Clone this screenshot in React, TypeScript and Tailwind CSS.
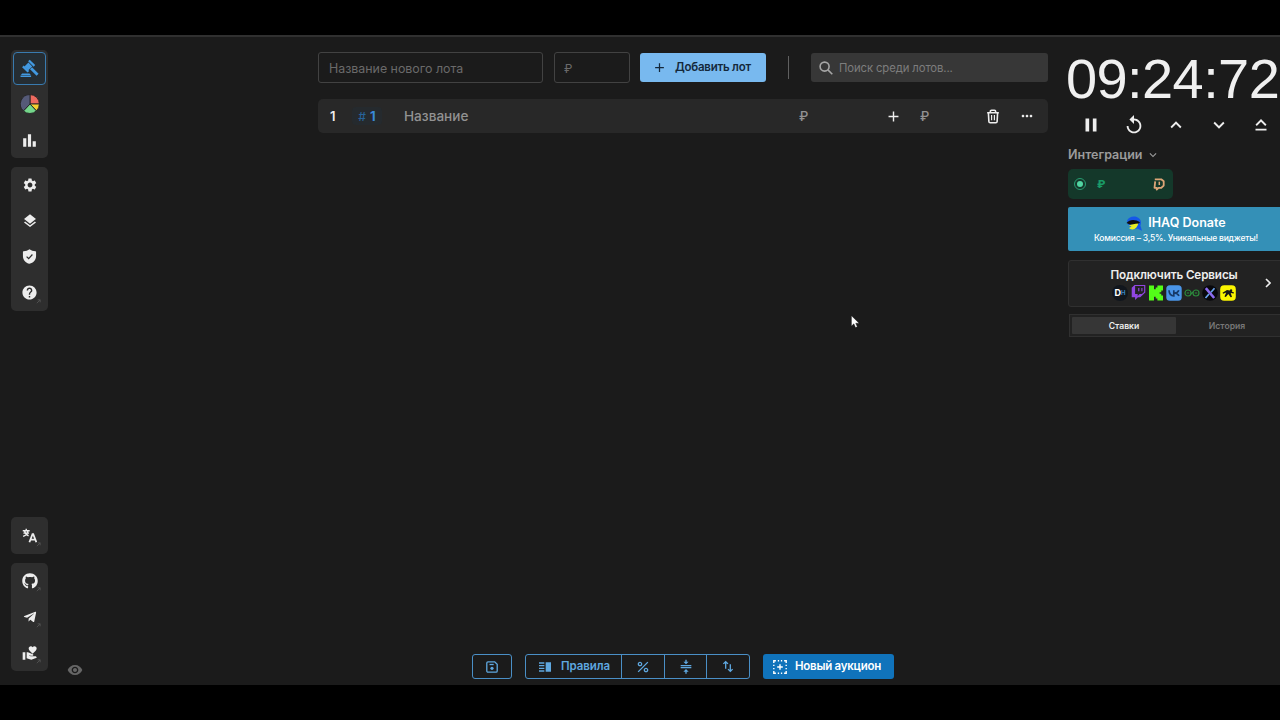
import type { ComponentType, ReactNode } from "react";
import {
  MdAdd,
  MdBarChart,
  MdCompress,
  MdHelp,
  MdKeyboardArrowDown,
  MdKeyboardArrowUp,
  MdKeyboardCapslock,
  MdLayers,
  MdMoreHoriz,
  MdPause,
  MdPercent,
  MdReplay,
  MdSettings,
  MdVerticalSplit,
  MdVisibility,
  MdVolunteerActivism,
} from "react-icons/md";
import { FaGithub, FaTelegramPlane, FaTwitch } from "react-icons/fa";

type IconType = ComponentType<{ className?: string }>;

const navGroupClass = "flex w-[37px] flex-col items-center rounded-[5px] bg-[#2e2e2e]";

const outlineBtnClass =
  "flex h-[25px] items-center justify-center border border-[#4a8fc6] text-[#5fa8e0]";

function GavelIcon() {
  return (
    <svg viewBox="0 0 18 18" className="size-[19px]" fill="currentColor">
      <path d="M9.200.6l5.200 5.200-1.500 1.500L7.700 2.100Z" />
      <path d="M8 3.400l3.600 3.600-4 4L4 7.400Z" />
      <path d="M3.500 6.200l5.200 5.200-1.500 1.500L2 7.700Z" />
      <path d="M11.400 7.800l6.200 6.200-1.900 1.900-6.200-6.200Z" />
      <path d="M2 13.800h7l1.200 1.300H.9ZM.5 15.600h10v1.400H.5Z" />
    </svg>
  );
}

function PieIcon() {
  return (
    <svg viewBox="0 0 20 20" className="size-5" stroke="#242424" strokeWidth="0.9">
      <path d="M10 10V.6A9.400 9.400 0 0 1 19.400 10Z" fill="#ee6a5f" />
      <path d="M10 10h9.400a9.400 9.400 0 0 1-3 6.900Z" fill="#f4cf2f" />
      <path d="M10 10l6.400 6.900a9.400 9.400 0 0 1-13 0Z" fill="#74d68b" />
      <path d="M10 10l-6.600 6.900A9.400 9.400 0 0 1 10 .6Z" fill="#555a78" />
    </svg>
  );
}

function ShieldIcon({ className }: { className?: string }) {
  return (
    <svg viewBox="0 0 16 16" className={className}>
      <path
        d="M8 .2c1.800 1.400 3.900 2 6.300 2.100.5 0 .7.300.7.700v4.400c0 4.200-2.800 7.200-7 8.400-4.200-1.200-7-4.200-7-8.400V3c0-.4.2-.7.700-.7C4.100 2.200 6.200 1.600 8 .2Z"
        fill="currentColor"
      />
      <path d="M4.900 8.100l2.200 2.100 4-4.300" fill="none" stroke="#2e2e2e" strokeWidth="1.300" />
    </svg>
  );
}

function TranslateIcon({ className }: { className?: string }) {
  return (
    <svg viewBox="0 0 16 16" className={className} fill="none" stroke="currentColor" strokeWidth="1.500">
      <path d="M.8 3h7.400M4.500.8V3M1.200 9C4 7.800 5.900 6 6.300 3M2.700 3c.4 2.500 2 4.300 4.300 5.300M1.500 5.500h6" />
      <path d="M7.900 15.200l3.300-8.600h.8l3.300 8.600M9.200 12.300h4.800" strokeWidth="1.900" />
    </svg>
  );
}

function SearchIcon() {
  return (
    <svg viewBox="0 0 14 14" className="size-[14px]" fill="none" stroke="#a6a6a6" strokeWidth="1.600">
      <circle cx="5.600" cy="5.600" r="4.500" />
      <path d="M8.900 8.900l4.400 4.400" />
    </svg>
  );
}

function TrashIcon() {
  return (
    <svg viewBox="0 0 14 16" className="h-[15px] w-[14px]" fill="none" stroke="currentColor" strokeWidth="1.700">
      <path d="M.8 4h12.400M4.200 4V2.600c0-.7.500-1.200 1.200-1.200h3.200c.7 0 1.200.5 1.200 1.200V4" />
      <path d="M2.100 4l.5 9.300c.05.8.6 1.400 1.400 1.400h6c.8 0 1.350-.6 1.400-1.400L11.900 4" />
      <path d="M5.500 6.500v5.500M8.500 6.500v5.500" strokeWidth="1.300" />
    </svg>
  );
}

function SaveIcon() {
  return (
    <svg viewBox="0 0 12 12" className="size-3" fill="none" stroke="currentColor" strokeWidth="1.300">
      <path d="M2 .8h6.700l2.500 2.500V10c0 .7-.5 1.200-1.200 1.200H2c-.7 0-1.200-.5-1.200-1.200V2C.8 1.300 1.300.8 2 .8Z" />
      <path d="M3.500 3.500h4.200" />
      <circle cx="6" cy="7.300" r="1.600" fill="currentColor" stroke="none" />
    </svg>
  );
}

function SortIcon() {
  return (
    <svg viewBox="0 0 12 14" className="h-[13px] w-3" fill="none" stroke="currentColor" strokeWidth="1.400">
      <path d="M3.500 9.500V2M1 4.200l2.500-2.500L6 4.200M8.500 4.500V12M6 9.800l2.500 2.500L11 9.800" />
    </svg>
  );
}

function NewAuctionIcon() {
  return (
    <svg viewBox="0 0 14 14" className="size-[14px]" fill="none" stroke="currentColor" strokeWidth="1.400">
      <path d="M.8 2.900V.8h2.100M4.800.8h1.300M7.900.8h1.300M11.100.8h2.100v2.100M13.200 4.800v1.300M13.200 7.900v1.300M13.200 11.100v2.100h-2.100M9.200 13.200H7.900M6.100 13.200H4.800M2.900 13.200H.8v-2.100M.8 9.200V7.900M.8 6.100V4.800" />
      <path d="M7 4.200v5.600M4.200 7h5.600" />
    </svg>
  );
}

function IhaqLogo() {
  return (
    <svg viewBox="0 0 16 16" className="size-4">
      <path d="M1 5C2 1.400 6.500-.3 10.700.9c3.900 1.200 5.200 5 3.700 8.600L16 14.800l-4.700-2.300C7 14.500 1.500 10 1 5Z" fill="#1558e8" />
      <path d="M.5 7C3.500 3.500 9 3 14 6.300c-1 1.500-3 2.500-5.700 2.500-3.200 0-5.800-.5-7.800-1.800Z" fill="#111" />
      <path d="M2.700 9.800c3-1.600 6-2 9.600-2.300-.7 3.500-3 5.700-5.700 5.900-1.600.1-2.900-.4-3.500-1.300l2.400-1.600Z" fill="#e8ee25" />
    </svg>
  );
}

function DonationIcon() {
  return (
    <svg viewBox="0 0 12 13" className="h-[13px] w-3" fill="none" stroke="#dda577" strokeWidth="1.800" strokeLinejoin="round">
      <path d="M1.800 1.300h6.400l2.500 2v4.200L8.300 9.800H5.500L3.700 11.600V9.800H1.500l.7-6.500" />
      <path d="M6.300 3.700v3.300" strokeWidth="1.500" />
    </svg>
  );
}

function ServiceIcons() {
  return (
    <div className="mt-[2px] flex items-center gap-[2px] tracking-normal">
      <span className="flex size-4 items-center justify-center rounded-full bg-[#11161d] text-[9px] font-bold text-white">
        D<span className="text-[6px] text-[#3a86c8]">H</span>
      </span>
      <span className="flex size-4 items-center justify-center">
        <FaTwitch className="size-[15px] text-[#9146e0]" />
      </span>
      <svg viewBox="0 0 16 16" className="size-4">
        <path d="M1 .5h5v3.700h1.700V2.400h1.700V.5H15v5h-1.700v1.800h-1.700v1.500h1.700v1.700H15v5H9.400v-1.900H7.700v-1.800H6v3.700H1Z" fill="#53fc18" />
      </svg>
      <svg viewBox="0 0 16 16" className="size-4">
        <rect x=".3" y=".3" width="15.400" height="15.400" rx="3.500" fill="#4a95e8" />
        <path
          d="M3 5.200c.2 3.500 1.800 5.600 4.800 5.600V5.200M12.800 5.200c-.6 1.500-2.300 2.700-4.500 2.800 2.200.1 3.900 1.100 4.700 2.800"
          fill="none"
          stroke="#173a68"
          strokeWidth="1.700"
        />
      </svg>
      <svg viewBox="0 0 16 16" className="size-4" fill="none" stroke="#2c8a3c" strokeWidth="1.200">
        <circle cx="4" cy="8" r="3" />
        <circle cx="12" cy="8" r="3" />
        <path d="M2.800 8h2.400M10.800 8h2.400M7 9l2-2" />
      </svg>
      <svg viewBox="0 0 16 16" className="size-4">
        <circle cx="8" cy="8" r="7.800" fill="#08080c" />
        <path d="M3.800 3.200l8.400 9.800" stroke="#8c6cf0" strokeWidth="2.600" />
        <path d="M12.500 3.200L9 7.200M7 9l-3.500 4" stroke="#69a4ef" strokeWidth="1.700" />
      </svg>
      <svg viewBox="0 0 16 16" className="size-4">
        <rect x=".2" y=".2" width="15.600" height="15.600" rx="4" fill="#fbf500" />
        <path d="M2.500 7.700L7 4.900l2.700.5 1.200-1.400 1.500.9-.6 1.500 2.200 1-.3 1.200-3-.5 1.300 3.900-1.400.3-2.300-3.200-2.500 3-1.300-.5 1.700-4-3 1.100Z" fill="#151515" />
      </svg>
    </div>
  );
}

function NavItem({ icon: Icon, size = "size-4", external }: { icon: IconType; size?: string; external?: boolean }) {
  return (
    <button type="button" className="relative flex h-9 w-full items-center justify-center text-[#ededed]">
      <Icon className={size} />
      {external ? (
        <svg viewBox="0 0 6 6" className="absolute right-[7px] bottom-[7px] size-[5px]" fill="none" stroke="#555">
          <path d="M1 5l4-4M2 1h3v3" />
        </svg>
      ) : null}
    </button>
  );
}

function Sidebar() {
  return (
    <aside className="flex w-[318px] shrink-0 items-end pl-[11px]">
      <nav className="flex h-full flex-col pt-[13px] pb-[14px]">
        <div className={`${navGroupClass} h-[108px] pt-[2px]`}>
          <button
            type="button"
            className="flex size-[33px] shrink-0 items-center justify-center rounded-[4px] border border-[#397bb0] bg-[#252d33] text-[#4299e1]"
          >
            <GavelIcon />
          </button>
          <button type="button" className="mt-px flex h-9 items-center justify-center">
            <PieIcon />
          </button>
          <NavItem icon={MdBarChart} size="size-[19px]" />
        </div>
        <div className={`${navGroupClass} mt-[9px] h-[144px]`}>
          <NavItem icon={MdSettings} />
          <NavItem icon={MdLayers} />
          <NavItem icon={ShieldIcon} size="size-[15px] -mt-px" />
          <NavItem icon={MdHelp} size="size-[17px] -mt-[2px]" external />
        </div>
        <div className={`${navGroupClass} mt-auto h-[37px] justify-center`}>
          <NavItem icon={TranslateIcon} size="size-[15px]" external />
        </div>
        <div className={`${navGroupClass} mt-[9px] h-[108px]`}>
          <NavItem icon={FaGithub} external />
          <NavItem icon={FaTelegramPlane} size="size-[14px]" external />
          <NavItem icon={MdVolunteerActivism} size="size-[16px]" external />
        </div>
      </nav>
      <MdVisibility className="mb-[7px] ml-[19px] size-4 text-[#666]" />
    </aside>
  );
}

function NewLotForm() {
  return (
    <div className="flex h-[31px] items-center">
      <input
        aria-label="Название нового лота"
        placeholder="Название нового лота"
        className="h-[31px] w-[225px] rounded-[3px] border border-[#424242] bg-transparent px-[10px] pt-px text-[12.400px] placeholder:text-[#6a6a6a]"
      />
      <input
        aria-label="₽"
        placeholder="₽"
        className="ml-[11px] h-[31px] w-[76px] rounded-[3px] border border-[#424242] bg-transparent px-[9px] pt-px text-[12px] placeholder:text-[#6a6a6a]"
      />
      <button
        type="button"
        className="ml-[10px] flex h-[29px] w-[126px] items-center rounded-[3px] bg-[#78b9ef] pl-3 text-[11.500px] font-semibold tracking-[-0.250px] whitespace-nowrap text-[#14283b]"
      >
        <MdAdd className="mr-[8px] size-[15px]" />
        <span className="pt-px">Добавить лот</span>
      </button>
      <span className="ml-[22px] h-[23px] w-px bg-[#606060]" />
      <div className="ml-auto flex h-[29px] w-[237px] items-center rounded-[3px] bg-[#373737] pl-[8px]">
        <SearchIcon />
        <input
          aria-label="Поиск"
          placeholder="Поиск среди лотов..."
          className="ml-[6px] w-[190px] bg-transparent pt-px text-[11.300px] tracking-[-0.100px] placeholder:text-[#7d7d7d]"
        />
      </div>
    </div>
  );
}

function LotRow() {
  return (
    <div className="mt-4 flex h-[34px] items-center rounded-[5px] bg-[#282828] pl-3 text-[13.600px] font-medium text-[#929292]">
      <span className="w-[22px] pt-px text-[13px] font-semibold text-[#eee]">1</span>
      <span className="flex h-[18px] w-[30px] items-center justify-center gap-[4px] rounded-[4px] bg-[#252a2e] pt-px text-[13px] font-bold text-[#3989d8]">
        <span className="text-[12px] font-medium text-[#276399]">#</span>1
      </span>
      <span className="ml-[22px] w-[395px]">Название</span>
      <span className="w-[86px] pt-px text-[13px]">₽</span>
      <MdAdd className="size-[17px] text-[#eee]" />
      <span className="ml-[18px] w-[66px] pt-px text-[13px]">₽</span>
      <span className="text-[#eee]">
        <TrashIcon />
      </span>
      <MdMoreHoriz className="ml-[19px] size-4 text-[#eee]" />
    </div>
  );
}

function ActionBar() {
  return (
    <div className="mt-auto mb-[6px] ml-[154px] flex">
      <button type="button" className={`${outlineBtnClass} w-10 rounded-[3px]`}>
        <SaveIcon />
      </button>
      <div className="ml-[13px] flex">
        <button
          type="button"
          className={`${outlineBtnClass} w-[97px] gap-2 rounded-l-[3px] text-[11.500px] font-semibold tracking-[-0.100px]`}
        >
          <MdVerticalSplit className="size-4" />
          <span className="pt-px">Правила</span>
        </button>
        <button type="button" className={`${outlineBtnClass} -ml-px w-[44px]`}>
          <MdPercent className="size-[16px]" />
        </button>
        <button type="button" className={`${outlineBtnClass} -ml-px w-[43px]`}>
          <MdCompress className="size-[16px]" />
        </button>
        <button type="button" className={`${outlineBtnClass} -ml-px w-[44px] rounded-r-[3px]`}>
          <SortIcon />
        </button>
      </div>
      <button
        type="button"
        className="ml-[13px] flex h-[25px] w-[131px] items-center gap-[8px] rounded-[3px] bg-[#1073bb] pl-[10px] text-[11.500px] font-semibold tracking-[-0.250px] whitespace-nowrap text-white"
      >
        <NewAuctionIcon />
        <span className="pt-px">Новый аукцион</span>
      </button>
    </div>
  );
}

function TimerButton({ children }: { children: ReactNode }) {
  return (
    <button type="button" className="flex w-[42.500px] shrink-0 items-center justify-center">
      {children}
    </button>
  );
}

function TimerPanel() {
  return (
    <aside className="ml-5 w-[212px] shrink-0 pt-[12px]">
      <div className="-ml-[2px] h-[60px] font-['Liberation_Sans',sans-serif] text-[56px] leading-[60px] tracking-[-0.600px] whitespace-nowrap text-[#f0f0f0]">
        09:24:72
      </div>
      <div className="mt-[6px] ml-[2px] flex h-5 text-[#eee]">
        <TimerButton>
          <MdPause className="size-[22px]" />
        </TimerButton>
        <TimerButton>
          <MdReplay className="size-[22px]" />
        </TimerButton>
        <TimerButton>
          <MdKeyboardArrowUp className="size-[22px]" />
        </TimerButton>
        <TimerButton>
          <MdKeyboardArrowDown className="size-[22px]" />
        </TimerButton>
        <TimerButton>
          <MdKeyboardCapslock className="size-[22px]" />
        </TimerButton>
      </div>
      <div className="mt-[11px] flex h-[18px] items-center text-[12.500px] font-semibold text-[#9b9b9b]">
        Интеграции
        <MdKeyboardArrowDown className="ml-[3px] size-[14px]" />
      </div>
      <div className="mt-[5px] flex h-[30px] w-[105px] items-center rounded-[5px] bg-[#14382a] px-[6px] text-[#1a9b67]">
        <span className="flex size-[12px] items-center justify-center rounded-full border border-[#279b70]">
          <span className="size-[6px] rounded-full bg-[#51d6a2]" />
        </span>
        <span className="ml-[11px] text-[11px] font-extrabold">₽</span>
        <span className="ml-auto pr-[2px]">
          <DonationIcon />
        </span>
      </div>
      <div className="mt-[8px] flex h-[44px] w-[219px] flex-col items-center rounded-[2px] bg-[#3490b7] pt-[8px] pr-[3px] text-white">
        <div className="flex h-[17px] items-center gap-[6px] text-[12.500px] font-semibold">
          <IhaqLogo />
          IHAQ Donate
        </div>
        <p className="text-[8.500px] leading-[13px] font-medium tracking-[-0.200px] whitespace-nowrap">
          Комиссия – 3,5%. Уникальные виджеты!
        </p>
      </div>
      <div className="mt-[9px] flex h-[47px] w-[219px] items-center rounded-[3px] border border-[#303030] bg-[#222]">
        <div className="ml-[41px] flex w-[128px] flex-col items-center pt-px text-[11.700px] leading-[15px] font-semibold tracking-[-0.130px] whitespace-nowrap text-[#eee]">
          Подключить Сервисы
          <ServiceIcons />
        </div>
        <svg viewBox="0 0 6 10" className="-mt-px ml-[27px] h-[10px] w-[6px]" fill="none" stroke="#eee" strokeWidth="1.600">
          <path d="M1 1l4 4-4 4" />
        </svg>
      </div>
      <div className="mt-[7px] ml-[1px] flex h-[23px] w-[217px] items-center border border-[#303030] bg-[#222] p-[2px] text-[8.600px] font-semibold">
        <span className="flex h-[17px] w-[104px] items-center justify-center rounded-[1px] bg-[#363636] pt-px text-[#eee]">
          Ставки
        </span>
        <span className="flex w-[102px] items-center justify-center pt-px text-[#777]">История</span>
      </div>
    </aside>
  );
}

export default function App() {
  return (
    <div className="relative h-[720px] w-[1280px] overflow-hidden bg-black pt-[35px] font-['Inter',sans-serif]">
      <main className="flex h-[650px] border-t-2 border-[#303030] bg-[#1b1b1b]">
        <Sidebar />
        <section className="flex w-[730px] shrink-0 flex-col pt-[15px]">
          <NewLotForm />
          <LotRow />
          <ActionBar />
        </section>
        <TimerPanel />
      </main>
      <svg viewBox="0 0 10 15" className="absolute top-[314.500px] left-[851px] h-[14px] w-[9px]">
        <path d="M.5.500v11.500l2.700-2.500L5 13.700l2-.8-1.800-4.100h3.800Z" fill="#fff" stroke="#111" strokeWidth=".4" />
      </svg>
    </div>
  );
}
